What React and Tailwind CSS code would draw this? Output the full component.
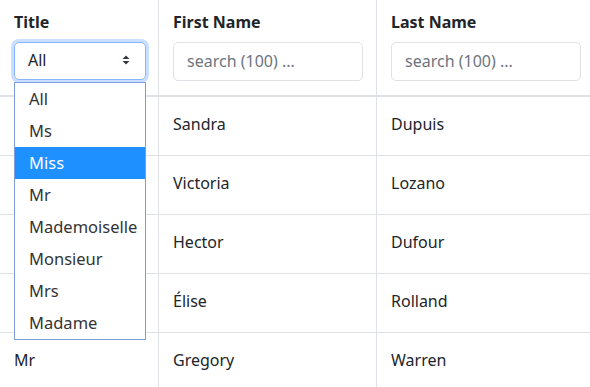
import { useState } from 'react'

const titles = ['All', 'Ms', 'Miss', 'Mr', 'Mademoiselle', 'Monsieur', 'Mrs', 'Madame']

const rows = [
  { title: 'Ms', first: 'Sandra', last: 'Dupuis' },
  { title: 'Miss', first: 'Victoria', last: 'Lozano' },
  { title: 'Mr', first: 'Hector', last: 'Dufour' },
  { title: 'Mrs', first: 'Élise', last: 'Rolland' },
  { title: 'Mr', first: 'Gregory', last: 'Warren' },
]

function SortArrows() {
  return (
    <svg width="8" height="10" viewBox="0 0 8 10" className="text-[#343a40]">
      <path d="M4 0.5 L7.5 4 L0.5 4 Z" fill="currentColor" />
      <path d="M4 9.5 L7.5 6 L0.5 6 Z" fill="currentColor" />
    </svg>
  )
}

function SearchInput() {
  return (
    <input
      type="text"
      placeholder="search (100) ..."
      className="h-[39px] w-[190px] rounded-[5px] border border-[#dee2e6] bg-white px-[13px] pb-[2px] text-[16px] text-[#212529] outline-none placeholder:text-[#6c757d]"
    />
  )
}

export default function App() {
  const [hover] = useState('Miss')
  const open = true

  return (
    <div
      className="relative h-[387px] w-[590px] overflow-hidden bg-white text-[16px] text-[#212529]"
      style={{ fontFamily: '"Segoe UI", "Noto Sans", "Open Sans", sans-serif' }}
    >
      <div className="grid grid-cols-[159px_218px_1fr]">
        {/* header */}
        <div className="border-r border-b-2 border-[#dee2e6] px-[14px] pt-[10px] pb-[14px]">
          <div className="h-[24px] font-bold leading-[24px]">Title</div>
          <div className="mt-[8px] flex h-[38px] w-[132px] items-center justify-between rounded-[5px] border border-[#86b7fe] pr-[15px] pb-[2px] pl-[13px] shadow-[0_0_0_3px_rgba(13,110,253,0.22)]">
            <span>All</span>
            <SortArrows />
          </div>
        </div>
        <div className="border-r border-b-2 border-[#dee2e6] px-[14px] pt-[10px] pb-[14px]">
          <div className="h-[24px] font-bold leading-[24px]">First Name</div>
          <div className="mt-[8px]">
            <SearchInput />
          </div>
        </div>
        <div className="border-b-2 border-[#dee2e6] px-[14px] pt-[10px] pb-[14px]">
          <div className="h-[24px] font-bold leading-[24px]">Last Name</div>
          <div className="mt-[8px]">
            <SearchInput />
          </div>
        </div>

        {rows.map((r, i) => (
          <div key={i} className="contents">
            <div className="flex h-[59px] items-center border-r border-b border-[#dee2e6] px-[14px] pb-[5px]">
              {/* rows under the open list are covered anyway */}
              <span className={open && i < 4 ? 'invisible' : ''}>{r.title}</span>
            </div>
            <div className="flex h-[59px] items-center border-r border-b border-[#dee2e6] px-[14px] pb-[5px]">{r.first}</div>
            <div className="flex h-[59px] items-center border-b border-[#dee2e6] px-[14px] pb-[5px]">{r.last}</div>
          </div>
        ))}
      </div>

      {/* open native select list */}
      {open && (
        <ul className="absolute top-[82px] left-[14px] w-[132px] border border-[#7f9ddb] bg-white">
          {titles.map((t) => (
            <li
              key={t}
              className={
                t === hover
                  ? 'flex h-[32px] items-center bg-[#1e90ff] pl-[14px] text-[16.5px] text-white'
                  : 'flex h-[32px] items-center pl-[14px] text-[16.5px] text-[#333]'
              }
            >
              {t}
            </li>
          ))}
        </ul>
      )}
    </div>
  )
}
